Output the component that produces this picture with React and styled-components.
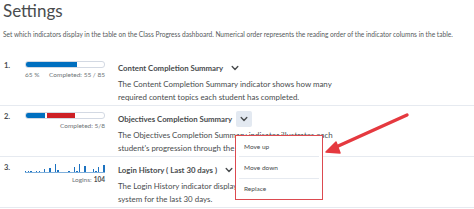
import React from "react";
import styled, { createGlobalStyle } from "styled-components";

const GlobalStyle = createGlobalStyle`
  html, body { margin: 0; padding: 0; background: #fff; }
  body { font-family: Lato, "Noto Sans", sans-serif; color: #494c4e; }
`;

const logins = [1, 1, 1, 0, 1, 1, 0, 3, 0, 4, 0, 8, 2, 0, 0, 0, 1, 0, 5, 1, 8, 0, 6, 0, 0, 3, 1, 5, 0, 7];

const indicators = [
  {
    title: "Content Completion Summary",
    lines: ["The Content Completion Summary indicator shows how many", "required content topics each student has completed."],
    chart: "progress",
  },
  {
    title: "Objectives Completion Summary",
    lines: ["The Objectives Completion Summary indicator illustrates each", "student's progression through the objectives."],
    chart: "objectives",
    open: true,
  },
  {
    title: "Login History ( Last 30 days )",
    lines: ["The Login History indicator displays logins to the", "system for the last 30 days."],
    chart: "logins",
  },
];

function Chevron() {
  return (
    <svg width="8" height="6" viewBox="0 0 8 6">
      <path d="M1.2 1.6 L4 4.4 L6.8 1.6" fill="none" stroke="#494c4e" strokeWidth="1.4" strokeLinecap="round" strokeLinejoin="round" />
    </svg>
  );
}

function Chart({ type }) {
  if (type === "progress") {
    return (
      <>
        <Bar>
          <Fill $color="#006fbf" style={{ width: "65%" }} />
        </Bar>
        <Caption $between>
          <span>65 %</span>
          <span>Completed: 55 / 85</span>
        </Caption>
      </>
    );
  }
  if (type === "objectives") {
    return (
      <>
        <Bar>
          <Fill $color="#006fbf" style={{ width: "24%" }} />
          <Fill $color="#cd2026" $gap style={{ width: "36%" }} />
        </Bar>
        <Caption>Completed: 5/8</Caption>
      </>
    );
  }
  return (
    <>
      <Spark>
        {logins.map((h, i) => (
          <SparkBar key={i} style={{ height: h }} />
        ))}
      </Spark>
      <Caption>
        Logins: <b>104</b>
      </Caption>
    </>
  );
}

export default function App() {
  return (
    <>
      <GlobalStyle />
      <Page>
        <Title>Settings</Title>
        <Intro>
          Set which indicators display in the table on the Class Progress dashboard. Numerical order represents the
          reading order of the indicator columns in the table.
        </Intro>
        <List>
          {indicators.map((ind, i) => (
            <Row key={ind.title}>
              <Num>{i + 1}.</Num>
              <ChartCell $spark={ind.chart === "logins"}>
                <Chart type={ind.chart} />
              </ChartCell>
              <Content>
                <Head>
                  <Name>{ind.title}</Name>
                  <Toggle $active={ind.open}>
                    <Chevron />
                  </Toggle>
                </Head>
                <Desc>
                  {ind.lines[0]}
                  <br />
                  {ind.lines[1]}
                </Desc>
              </Content>
            </Row>
          ))}
        </List>
        <Menu>
          <MenuItem>Move up</MenuItem>
          <MenuItem>Move down</MenuItem>
          <MenuItem $last>Replace</MenuItem>
        </Menu>
        <Arrow width="474" height="209" viewBox="0 0 474 209">
          <line x1="407" y1="115" x2="336" y2="147" stroke="#e5393f" strokeWidth="3.4" strokeLinecap="round" />
          <path d="M326 152 L336 142 L340 153 Z" fill="#e5393f" stroke="#e5393f" strokeWidth="1.5" strokeLinejoin="round" />
        </Arrow>
      </Page>
    </>
  );
}

const Page = styled.div`
  position: relative;
  width: 474px;
  height: 209px;
  overflow: hidden;
`;

const Title = styled.h1`
  margin: 0;
  padding: 0 0 0 3px;
  font-size: 17px;
  font-weight: 400;
  line-height: 22px;
  color: #494c4e;
`;

const Intro = styled.p`
  margin: 8px 0 0;
  padding-left: 3px;
  font-size: 6.6px;
  line-height: 8px;
  white-space: nowrap;
  color: #565a5c;
`;

const List = styled.div`
  margin-top: 17px;
`;

const Row = styled.div`
  display: grid;
  grid-template-columns: 8px 80px 1fr;
  column-gap: 13px;
  height: 51px;
  padding-left: 4px;
  border-bottom: 1px solid #e6eaf0;
  box-sizing: border-box;
`;

const Num = styled.div`
  padding-top: 6px;
  font-size: 7.5px;
  font-weight: 700;
  color: #494c4e;
`;

const ChartCell = styled.div`
  padding-top: ${(p) => (p.$spark ? "5px" : "6px")};
  display: flex;
  flex-direction: column;
`;

const Bar = styled.div`
  display: flex;
  height: 5px;
  border: 1px solid #d3d9e3;
  border-radius: 3px;
  overflow: hidden;
  background: #fff;
`;

const Fill = styled.div`
  height: 100%;
  background: ${(p) => p.$color};
  margin-left: ${(p) => (p.$gap ? "2px" : "0")};
`;

const Caption = styled.div`
  display: flex;
  justify-content: ${(p) => (p.$between ? "space-between" : "flex-end")};
  margin-top: 3px;
  font-size: 6.5px;
  line-height: 8px;
  color: #6e7477;
  b {
    color: #494c4e;
    margin-left: 2px;
  }
`;

const Spark = styled.div`
  display: flex;
  align-items: flex-end;
  justify-content: space-between;
  height: 10px;
  border-bottom: 1px solid #7fb0dc;
`;

const SparkBar = styled.div`
  width: 1.4px;
  background: #1c72c0;
`;

const Content = styled.div`
  padding-top: 6px;
`;

const Head = styled.div`
  display: flex;
  align-items: center;
  gap: 4px;
  height: 13px;
`;

const Name = styled.div`
  font-size: 7.8px;
  font-weight: 700;
  color: #494c4e;
`;

const Toggle = styled.div`
  display: flex;
  align-items: center;
  justify-content: center;
  width: 16px;
  height: 16px;
  border-radius: 2px;
  background: ${(p) => (p.$active ? "#e3e9f1" : "transparent")};
`;

const Desc = styled.div`
  margin-top: 4px;
  font-size: 7.9px;
  line-height: 13px;
  color: #494c4e;
  white-space: nowrap;
`;

const Menu = styled.div`
  position: absolute;
  left: 235px;
  top: 135px;
  width: 88px;
  height: 65px;
  box-sizing: border-box;
  border: 1.5px solid #dc4a50;
  background: #fff;
  padding: 0 3px;
  display: flex;
  flex-direction: column;
`;

const MenuItem = styled.div`
  flex: 1;
  display: flex;
  align-items: center;
  padding-left: 5px;
  font-size: 6.5px;
  color: #494c4e;
  border-bottom: ${(p) => (p.$last ? "none" : "1px solid #e6eaf0")};
`;

const Arrow = styled.svg`
  position: absolute;
  left: 0;
  top: 0;
  pointer-events: none;
`;
